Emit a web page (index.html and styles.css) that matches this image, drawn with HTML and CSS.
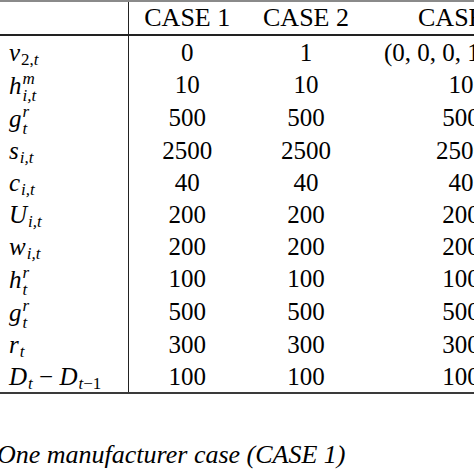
FILE: index.html
```html
<!DOCTYPE html>
<html>
<head>
<meta charset="utf-8">
<link rel="stylesheet" href="styles.css">
</head>
<body>
<div class="page">
  <table class="params">
    <colgroup>
      <col class="c-label"><col class="c-one"><col class="c-two"><col class="c-three">
    </colgroup>
    <thead>
      <tr><th class="lab"></th><th>CASE 1</th><th>CASE 2</th><th>CASE 3</th></tr>
    </thead>
    <tbody>
      <tr><td class="lab"><i>v</i><sub class="s1">2,<i>t</i></sub></td><td>0</td><td>1</td><td>(0, 0, 0, 1, 1, 1)</td></tr>
      <tr><td class="lab"><i>h</i><span class="ss"><i class="up">m</i><i class="dn">i,t</i></span></td><td>10</td><td>10</td><td>10</td></tr>
      <tr><td class="lab"><i>g</i><span class="ss"><i class="up">r</i><i class="dn">t</i></span></td><td>500</td><td>500</td><td>500</td></tr>
      <tr><td class="lab"><i>s</i><sub class="s1"><i>i,t</i></sub></td><td>2500</td><td>2500</td><td>2500</td></tr>
      <tr><td class="lab"><i>c</i><sub class="s1"><i>i,t</i></sub></td><td>40</td><td>40</td><td>40</td></tr>
      <tr><td class="lab"><i>U</i><sub class="s1"><i>i,t</i></sub></td><td>200</td><td>200</td><td>200</td></tr>
      <tr><td class="lab"><i>w</i><sub class="s1"><i>i,t</i></sub></td><td>200</td><td>200</td><td>200</td></tr>
      <tr><td class="lab"><i>h</i><span class="ss"><i class="up">r</i><i class="dn">t</i></span></td><td>100</td><td>100</td><td>100</td></tr>
      <tr><td class="lab"><i>g</i><span class="ss"><i class="up">r</i><i class="dn">t</i></span></td><td>500</td><td>500</td><td>500</td></tr>
      <tr><td class="lab"><i>r</i><sub class="s1"><i>t</i></sub></td><td>300</td><td>300</td><td>300</td></tr>
      <tr><td class="lab"><i>D</i><sub class="s1"><i>t</i></sub> <span class="op">−</span> <i>D</i><sub class="s1"><i>t</i>−1</sub></td><td>100</td><td>100</td><td>100</td></tr>
    </tbody>
  </table>
  <p class="caption">One manufacturer case (CASE 1)</p>
</div>
</body>
</html>
```
FILE: styles.css
```css
html, body {
  margin: 0;
  padding: 0;
  background: #fff;
}
.page {
  width: 474px;
  height: 474px;
  overflow: hidden;
  font-family: "Liberation Serif", "Times New Roman", serif;
  color: #000;
}
.params {
  border-collapse: collapse;
  table-layout: fixed;
  width: 556px;
  font-size: 25px;
  border-top: 2px solid #8a8a8a;
  border-bottom: 2px solid #3a3a3a;
}
.c-label { width: 128px; }
.c-one { width: 118px; }
.c-two { width: 120px; }
.c-three { width: 190px; }
.params th,
.params td {
  padding: 2px 0 0;
  height: 30px;
  line-height: 30px;
  text-align: center;
  vertical-align: top;
  white-space: nowrap;
  font-weight: normal;
}
.params thead th {
  height: 31px;
  padding-top: 1px;
  font-size: 26px;
  border-bottom: 2px solid #222;
}
.params .lab {
  text-align: left;
  padding-left: 9px;
  border-right: 1px solid #222;
}
.params i {
  font-style: italic;
}
.s1 {
  font-size: 17px;
  line-height: 0;
  vertical-align: -4px;
  margin-left: 1px;
}
.ss {
  display: inline-flex;
  flex-direction: column;
  font-size: 17px;
  line-height: 17px;
  vertical-align: 10px;
  margin-left: 1px;
  height: 17px;
}
.ss .up,
.ss .dn {
  display: block;
}
.op {
  font-style: normal;
}
.caption {
  margin: 46px 0 0 -3px;
  font-size: 26px;
  line-height: 30px;
  font-style: italic;
}
```
